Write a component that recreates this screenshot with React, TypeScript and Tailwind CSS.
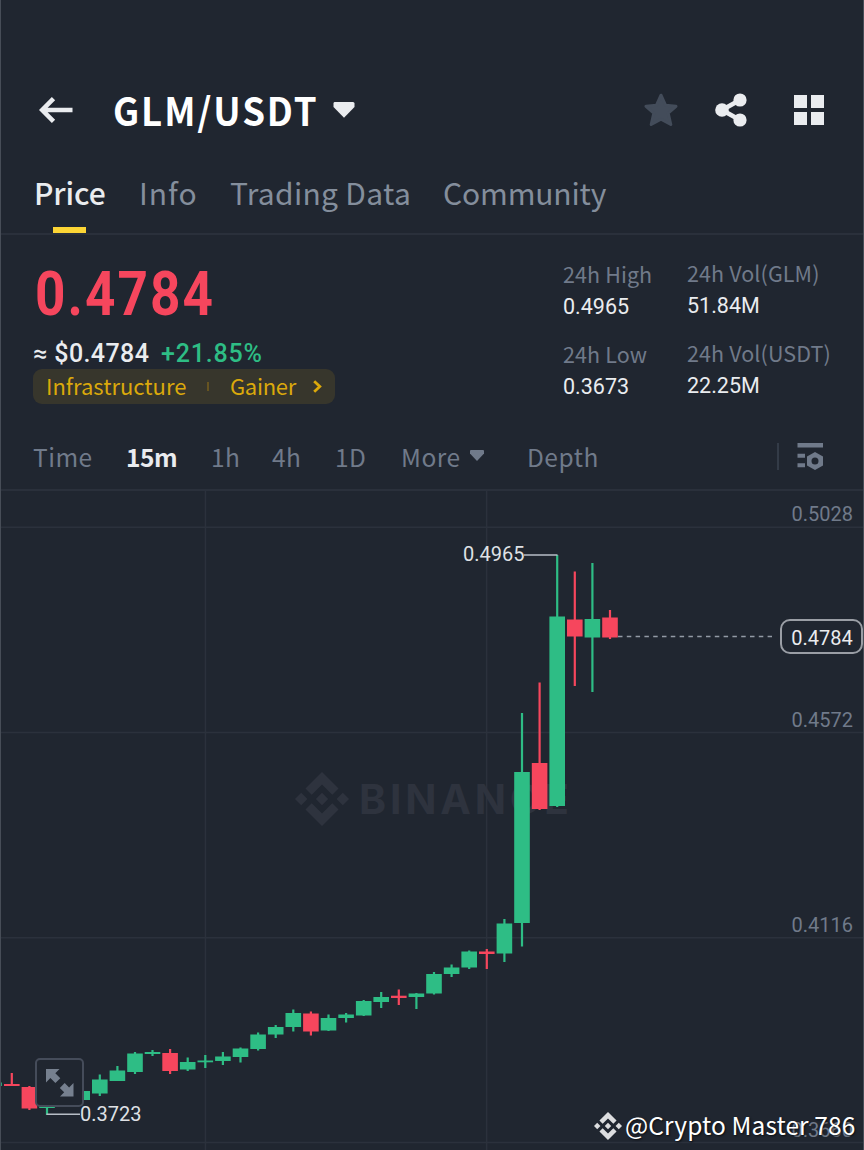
import React from "react";

type Candle = { x: number; high: number; low: number; top: number; bottom: number; up: boolean };

const c = (x: number, up: boolean, high: number, top: number, bottom: number, low: number): Candle => ({
  x, up, high, top, bottom, low,
});

const candles: Candle[] = [
  c(-6, true, 1082.5, 1082.5, 1086, 1086),
  c(11.8, false, 1073, 1084, 1086, 1086),
  c(29.4, false, 1086, 1087, 1108.5, 1110),
  c(47, true, 1100, 1100, 1108, 1115),
  c(82.2, true, 1091, 1091, 1100, 1100),
  c(99.8, true, 1074.5, 1079.5, 1093.5, 1096),
  c(117.4, true, 1066, 1070.5, 1081, 1081),
  c(135, true, 1052, 1053.5, 1072, 1074),
  c(152.5, true, 1050, 1052, 1054, 1056),
  c(170.1, false, 1049, 1053, 1071, 1074),
  c(187.7, true, 1057.5, 1062, 1069.5, 1071),
  c(205.3, true, 1055, 1060.5, 1062.3, 1068),
  c(222.9, true, 1052, 1056.5, 1061, 1065),
  c(240.5, true, 1047.5, 1048.5, 1057, 1062.5),
  c(258.1, true, 1032.5, 1034.5, 1049, 1050.5),
  c(275.7, true, 1025, 1027, 1034.5, 1038),
  c(293.3, true, 1009.5, 1013, 1027, 1031.5),
  c(310.9, false, 1011.5, 1013.5, 1031.5, 1035.5),
  c(328.5, true, 1014.5, 1018, 1030.5, 1031),
  c(346.1, true, 1013, 1014.5, 1018, 1022.5),
  c(363.7, true, 1000, 1001, 1015.5, 1016),
  c(381.2, true, 992, 997, 1002, 1008),
  c(398.8, false, 989.5, 995.7, 998, 1005),
  c(416.4, true, 993, 993.5, 997, 1009),
  c(434, true, 972, 974, 993.5, 994.5),
  c(451.6, true, 964.5, 967.5, 974, 977),
  c(469.2, true, 950.5, 951.5, 967.5, 969),
  c(486.8, false, 949, 951.5, 954, 969),
  c(504.4, true, 919, 923.5, 953.5, 962),
  c(522, true, 713, 772, 923, 946.5),
  c(539.6, false, 682.5, 763, 809, 810),
  c(557.2, true, 555, 616.5, 806, 807),
  c(574.8, false, 571.5, 619.5, 636.5, 686),
  c(592.4, true, 563, 619, 637.5, 692),
  c(610, false, 610, 617.5, 637.5, 639),
];

function BinanceMark({ className }: { className: string }) {
  return (
    <svg className={className} viewBox="0 0 54 54" fill="currentColor" aria-hidden="true">
      <path d="M27 0 43.5 16.5 37.3 22.7 27 12.4 16.7 22.7 10.5 16.5Z" />
      <path d="M27 54 43.5 37.5 37.3 31.3 27 41.6 16.7 31.3 10.5 37.5Z" />
      <path d="M27 20.8 33.2 27 27 33.2 20.8 27Z" />
      <path d="M6.2 20.8 12.4 27 6.2 33.2 0 27Z" />
      <path d="M47.8 20.8 54 27 47.8 33.2 41.6 27Z" />
    </svg>
  );
}

function Header() {
  return (
    <header className="mb-px flex h-[72px] items-center pl-[38px] pr-[39px]">
      <svg className="h-[28px] w-[34px]" viewBox="0 0 34 28" fill="none" stroke="#eaecef" strokeWidth="4.6">
        <path d="M33.5 14H3.5M14.5 2.6 3.2 14l11.3 11.4" />
      </svg>
      <h1 className="-mt-[3px] ml-[40px] w-[220px] whitespace-nowrap font-['Noto_Sans_CJK_SC',sans-serif] text-[38.5px] font-bold leading-[56px] text-white">
        <span className="inline-block origin-left scale-x-[0.95] tracking-[2px]">GLM/USDT</span>
      </h1>
      <svg className="h-[16px] w-[22px]" viewBox="0 0 22 16" fill="#eaecef">
        <path d="M1.5 0h18.5q1.5 0 1.5 1.5V5L11 15.7.5 5V1.5Q.5 0 1.500 0Z" />
      </svg>
      <svg className="ml-auto h-[34px] w-[34px]" viewBox="0 0 34 34" fill="#434c5a" stroke="#434c5a" strokeWidth="3" strokeLinejoin="round">
        <path d="M17 2.200 21.500 12.200 32 13.300 24.200 20.200 26.800 31.500 17 26.200 7.200 31.500 9.800 20.200 2 13.300 12.500 12.200Z" />
      </svg>
      <svg className="ml-[37px] h-[34px] w-[32px]" viewBox="0 0 32 34" fill="#eaecef">
        <path d="M25 7 7 17 25 27" fill="none" stroke="#eaecef" strokeWidth="4.600" />
        <circle cx="25" cy="7" r="6.600" />
        <circle cx="7" cy="17" r="6.800" />
        <circle cx="25" cy="27" r="6.600" />
      </svg>
      <div className="ml-[47px] grid grid-cols-2 gap-[4px]">
        <i className="size-[13px] bg-[#eaecef]" />
        <i className="size-[13px] bg-[#eaecef]" />
        <i className="size-[13px] bg-[#eaecef]" />
        <i className="size-[13px] bg-[#eaecef]" />
      </div>
    </header>
  );
}

function Tabs() {
  return (
    <nav className="flex h-[88px] border-b-2 border-[#2a303b] pl-[33px] pt-[23px] font-['Noto_Sans_CJK_SC',sans-serif] text-[30px] leading-[44px] text-[#848e9c]">
      <div className="flex w-[105px] flex-col">
        <span className="font-medium tracking-[-0.1px] text-[#eaecef]">Price</span>
        <i className="ml-[19px] mt-[13px] h-[7px] w-[33px] bg-[#fcd535]" />
      </div>
      <span className="w-[91px] tracking-[1px]">Info</span>
      <span className="w-[213px] whitespace-nowrap tracking-[0.300px]">Trading Data</span>
      <span className="tracking-[-0.150px]">Community</span>
    </nav>
  );
}

function Stat({ label, value }: { label: string; value: string }) {
  return (
    <div className="h-[80px]">
      <div className="whitespace-nowrap font-['Noto_Sans_CJK_SC',sans-serif] text-[21.500px] leading-[32px] tracking-[0.100px] text-[#707a8a]">
        {label}
      </div>
      <div className="font-['Roboto',sans-serif] text-[21.500px] leading-[34px] text-[#eaecef]">{value}</div>
    </div>
  );
}

function Summary() {
  return (
    <section className="flex h-[190px] pl-[32px] pt-[23px]">
      <div className="w-[530px] font-['Roboto',sans-serif]">
        <div className="ml-[1.500px] h-[75px] text-[61px] font-bold leading-[72px] text-[#f6465d]">
          <span className="inline-block origin-left scale-x-[0.870] tracking-[2.400px]">0.4784</span>
        </div>
        <div className="flex h-[36px] whitespace-nowrap text-[25px] font-medium leading-[42px] tracking-[0.400px]">
          <span className="w-[128px] text-[#eaecef]">≈ $0.4784</span>
          <span className="tracking-[0.800px] text-[#2ebd85]">+21.85%</span>
        </div>
        <div className="flex h-[35px] w-[302px] items-center rounded-[9px] bg-[#37362c] pl-[13px] font-['Noto_Sans_CJK_SC',sans-serif] text-[22px] leading-[34px] text-[#dba90b]">
          <span className="-mt-[4px] w-[161px]">Infrastructure</span>
          <i className="mr-[21px] h-[9px] w-[2px] bg-[#665421]" />
          <span className="-mt-[4px] w-[83px] tracking-[-0.300px]">Gainer</span>
          <svg className="h-[13px] w-[9px]" viewBox="0 0 9 13" fill="none" stroke="currentColor" strokeWidth="2.800">
            <path d="M1.200 1.200 6.800 6.500 1.200 11.800" />
          </svg>
        </div>
      </div>
      <div className="w-[124px]">
        <Stat label="24h High" value="0.4965" />
        <Stat label="24h Low" value="0.3673" />
      </div>
      <div className="-mt-px">
        <Stat label="24h Vol(GLM)" value="51.84M" />
        <Stat label="24h Vol(USDT)" value="22.25M" />
      </div>
    </section>
  );
}

function Intervals() {
  return (
    <nav className="flex h-[66px] items-center border-b-2 border-[#2a303b] pl-[32px] font-['Noto_Sans_CJK_SC',sans-serif] text-[24.500px] leading-[36px] tracking-[0.500px] text-[#707a8a]">
      <span className="w-[93px]">Time</span>
      <span className="w-[85px] font-bold tracking-[-0.500px] text-[#eaecef]">15m</span>
      <span className="w-[61px]">1h</span>
      <span className="w-[63px]">4h</span>
      <span className="w-[66px]">1D</span>
      <span className="w-[69px]">More</span>
      <svg className="mb-[4px] h-[11px] w-[14px]" viewBox="0 0 14 11" fill="currentColor">
        <path d="M0 1Q0 0 1 0h12q1 0 1 1v2.500L7 11 0 3.500Z" />
      </svg>
      <span className="ml-[43px]">Depth</span>
      <i className="mb-[2px] ml-auto h-[27px] w-[2px] bg-[#333b47]" />
      <svg className="mb-[2px] ml-[18px] mr-[39px] h-[27px] w-[27px]" viewBox="0 0 27 27" fill="#707a8a">
        <path d="M.5 0h25.500v4.500H.5ZM.5 10.700h7.500v4H.5ZM.5 20.200h7.500v4H.5Z" />
        <path fillRule="evenodd" d="M18 9 26 13.500v9l-8 4.500L10 22.500v-9ZM18 14.500a3.500 3.500 0 1 0 0 7 3.500 3.500 0 0 0 0-7Z" />
      </svg>
    </nav>
  );
}

function ChartGrid() {
  return (
    <svg className="block h-[659px] w-[862px]" viewBox="1 491 862 659">
      <g fill="#2b313c">
        <path d="M0 526.500h864v1.500H0ZM0 731.700h864v1.500H0ZM0 936.900h864v1.500H0ZM0 1141.800h864v1.500H0ZM204.700 491h1.500v660h-1.500ZM485.900 491h1.500v660h-1.500Z" />
      </g>
    </svg>
  );
}

function CandleSeries() {
  return (
    <svg className="absolute inset-0 h-[659px] w-[862px]" viewBox="1 491 862 659">
      {candles.map((k) => (
        <g key={k.x} fill={k.up ? "#2ebd85" : "#f6465d"}>
          <rect x={k.x - 1.1} y={k.high} width={2.2} height={k.low - k.high} />
          <rect x={k.x - 7.8} y={k.top} width={15.6} height={k.bottom - k.top} />
        </g>
      ))}
      <path d="M524 555H557.500M46.500 1114.300H80" stroke="#b7bdc6" strokeWidth="1.500" />
      <path d="M618 636.500H772" stroke="#929aa5" strokeWidth="1.500" strokeDasharray="4.500 4.300" />
    </svg>
  );
}

function Chart() {
  const label = "absolute right-[10px] font-['Roboto',sans-serif] text-[20px] leading-[24px] text-[#707a8a]";
  return (
    <section className="relative h-[660px] overflow-hidden">
      <ChartGrid />
      <div className="absolute left-[294px] top-[281px] flex items-center text-[#2e333e]">
        <BinanceMark className="size-[54px]" />
        <span className="ml-[10px] font-['Inter',sans-serif] text-[41px] font-bold leading-[54px] tracking-[3.800px]">BINANCE</span>
      </div>
      <CandleSeries />
      <span className={`${label} top-[11px]`}>0.5028</span>
      <span className={`${label} top-[217px]`}>0.4572</span>
      <span className={`${label} top-[422px]`}>0.4116</span>
      <span className={`${label} top-[627px]`}>0.3660</span>
      <span className="absolute left-[462px] top-[51px] font-['Roboto',sans-serif] text-[20px] leading-[24px] text-[#dfe1e5]">0.4965</span>
      <span className="absolute left-[79px] top-[611px] font-['Roboto',sans-serif] text-[20px] leading-[24px] text-[#dfe1e5]">0.3723</span>
      <span className="absolute right-0 top-[128px] flex h-[35px] w-[83px] items-center justify-center rounded-[10px] border-2 border-[#9a9ea5] bg-[#202630] pl-px pt-[2px] font-['Roboto',sans-serif] text-[20px] leading-[24px] text-[#eaecef]">
        0.4784
      </span>
      <div className="absolute left-[34px] top-[567px] flex size-[49px] items-center justify-center rounded-[5px] border-2 border-[#454c5a] bg-[#202630]">
        <svg className="size-[28px]" viewBox="0 0 28 28" fill="#76808f">
          <path d="M0 0h13.500L9.300 4.200l5 5-4.900 4.900-5-5L0 13.500ZM27.500 27.500H14l4.200-4.200-4.400-4.400 4.900-4.900 4.400 4.400 4.400-4.400Z" />
        </svg>
      </div>
      <div className="absolute left-[593px] top-[621px] flex items-center text-white">
        <BinanceMark className="size-[28px] text-[#dcdddf]" />
        <span className="-mt-[2px] ml-[3px] whitespace-nowrap font-['Noto_Sans_CJK_SC',sans-serif] text-[24.500px] leading-[28px] tracking-[0.100px] [text-shadow:1px_1px_2px_#000a]">
          @Crypto Master 786
        </span>
      </div>
    </section>
  );
}

export default function App() {
  return (
    <main className="h-[1150px] w-[864px] overflow-hidden border-x border-[#474d57] bg-[#202630] pt-[74px]">
      <Header />
      <Tabs />
      <Summary />
      <Intervals />
      <Chart />
    </main>
  );
}
